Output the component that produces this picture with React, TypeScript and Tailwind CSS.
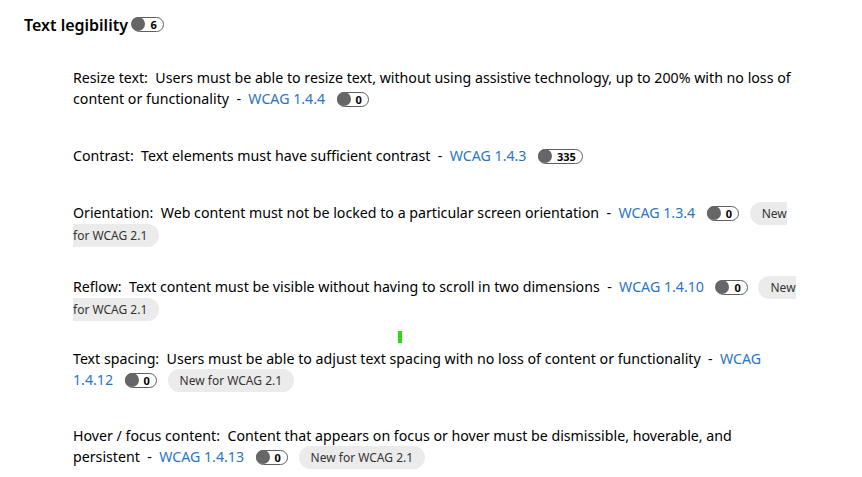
import React from "react";

function Count({ n }: { n: string }) {
  return (
    <span className="inline-flex items-center align-middle h-[15px] rounded-full border-[1.5px] border-[#5f5f5f] bg-white relative top-[-1px]">
      <span className="w-[14px] h-[14px] rounded-full bg-[#666666] -ml-[1.5px] -my-[1px]" />
      <span className="text-[11px] font-bold leading-none text-black pl-[5px] pr-[6px]">{n}</span>
    </span>
  );
}

type Item = { label: string; desc: string; link: string; count: string; isNew?: boolean; gap: string };

const items: Item[] = [
  { label: "Resize text:", desc: "Users must be able to resize text, without using assistive technology, up to 200% with no loss of content or functionality", link: "WCAG 1.4.4", count: "0", gap: "mt-0" },
  { label: "Contrast:", desc: "Text elements must have sufficient contrast", link: "WCAG 1.4.3", count: "335", gap: "mt-[36px]" },
  { label: "Orientation:", desc: "Web content must not be locked to a particular screen orientation", link: "WCAG 1.3.4", count: "0", isNew: true, gap: "mt-[36px]" },
  { label: "Reflow:", desc: "Text content must be visible without having to scroll in two dimensions", link: "WCAG 1.4.10", count: "0", isNew: true, gap: "mt-[30px]" },
  { label: "Text spacing:", desc: "Users must be able to adjust text spacing with no loss of content or functionality", link: "WCAG 1.4.12", count: "0", isNew: true, gap: "mt-[28px]" },
  { label: "Hover / focus content:", desc: "Content that appears on focus or hover must be dismissible, hoverable, and persistent", link: "WCAG 1.4.13", count: "0", isNew: true, gap: "mt-[34px]" },
];

export default function App() {
  return (
    <div className="relative w-[862px] h-[477px] bg-white overflow-hidden text-black" style={{ fontFamily: '"Noto Sans", "Open Sans", sans-serif' }}>
      <div className="pt-[14px] pl-[24px]">
        <h2 className="text-[16px] font-semibold leading-[22px] flex items-center gap-[4px]">
          Text legibility <Count n="6" />
        </h2>
      </div>
      <div className="pl-[73px] pr-[64px] pt-[31px] flex flex-col">
        {items.map((it) => (
          <p key={it.label} className={`text-[14.2px] leading-[21px] ${it.gap}`}>
            {it.label}{"\u00a0 "}{it.desc}{"\u00a0 -\u00a0 "}
            <span className="text-[#2b75c9]">{it.link}</span>
            <span className="ml-[12px]"><Count n={it.count} /></span>
            {it.isNew && (
              <>
                {" "}
                <span className="ml-[7px] bg-[#ebebeb] text-[#333] text-[12px] rounded-full px-[12px] py-[3px]">New for WCAG 2.1</span>
              </>
            )}
          </p>
        ))}
      </div>
      <div className="absolute left-[398px] top-[331px] w-[4px] h-[12px] bg-[#22dd11]" />
    </div>
  );
}
